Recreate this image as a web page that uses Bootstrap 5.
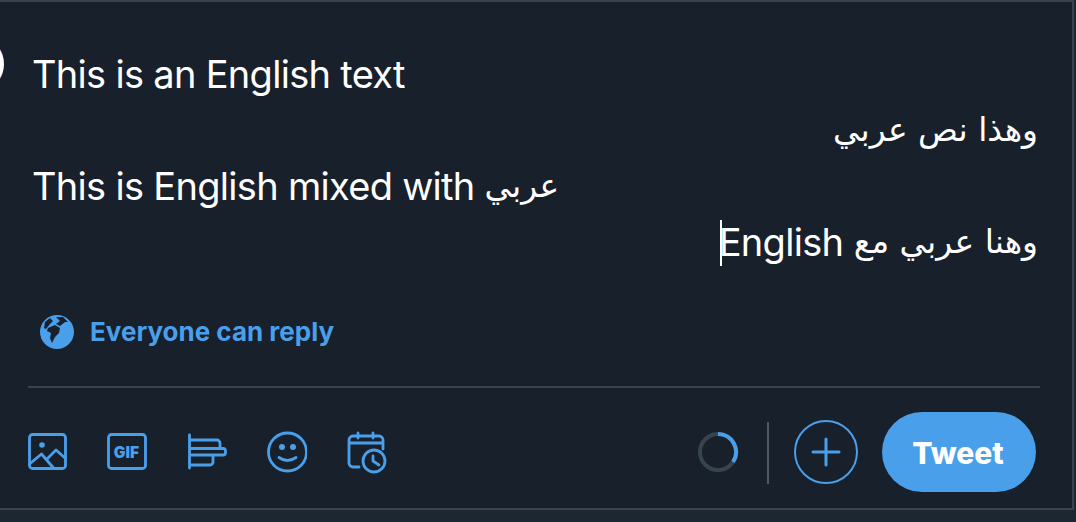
<!DOCTYPE html>
<html lang="en"><head><meta charset="utf-8"><title>Tweet composer</title>
<link href="https://cdn.jsdelivr.net/npm/bootstrap@5.3.0/dist/css/bootstrap.min.css" rel="stylesheet">
<style>
html,body{height:522px;overflow:hidden;background:#1c2732;margin:0}
.composer{width:1074px;height:510px;background:#18202b;border-top:2px solid #38444d;border-right:2px solid #38444d;border-bottom:2px solid #38444d;position:relative;overflow:hidden;font-family:Inter,"DejaVu Sans",sans-serif;color:#fff}
.avatar-edge{position:absolute;left:-36px;top:38px;width:40px;height:48px;border-radius:50%;background:#fff}
.editor{padding:44px 34px 0 32px;height:296px}
.editor p{margin:0;font-size:38px;line-height:56px;height:56px;letter-spacing:-.7px;white-space:nowrap}
.ar{font-family:"DejaVu Sans",sans-serif;font-size:33px;letter-spacing:0;line-height:1;vertical-align:3px}
.caret{display:inline-block;width:2px;height:46px;background:#fff;vertical-align:-10px;margin-right:-3px;margin-left:1px}
.reply{padding-left:40px;gap:16px;height:88px;padding-bottom:21px;color:#4a9fea;font-weight:700;font-size:26px}
.rule{height:2px;background:#38444d;margin:0 32px 0 28px}
.tools{padding:24px 36px 0 27px}
.tool{width:40px;height:44px;margin-right:40px}
.tool:last-child{margin-right:0}
.meter{width:42px;height:42px}
.sep{width:2px;height:62px;background:#4f5a63;margin:2px 25px 0 28px}
.add{width:64px;height:64px;border:2px solid #4a9fea;border-radius:50%;margin-right:24px}
.tweet-btn{width:154px;height:80px;border-radius:40px;background:#4a9fea;border:0;color:#fff;font-weight:800;font-size:30px;font-family:Inter,sans-serif;padding:2px 2px 0 0}
</style></head><body>
<div class="composer">
<div class="avatar-edge"></div>
<div class="editor">
<p>This is an English text</p>
<p dir="rtl"><span class="ar">وهذا نص عربي</span></p>
<p>This is English mixed with <span class="ar">عربي</span></p>
<p dir="rtl"><span class="ar">وهنا عربي مع </span>English<span class="caret"></span></p>
</div>
<div class="reply d-flex align-items-center">
<svg width="34" height="34" viewBox="0 0 34 34"><circle cx="17" cy="17" r="17" fill="#4a9fea"/><path d="M5 7l5-4 3 3-3 3-4 5-2-1zM16 2h7l5 5h-3l-5 4-4-2 4-3zM8 13l7-3 5 3-1 5-4 4-3 6-2-5 1-5-4-2z" fill="#18202b"/></svg>
<span>Everyone can reply</span>
</div>
<div class="rule"></div>
<div class="tools d-flex align-items-center">
<svg class="tool" viewBox="0 0 40 44" fill="none" stroke="#4a9fea" stroke-width="2.800" stroke-linejoin="round" stroke-linecap="round"><rect x="2.500" y="4.500" width="36" height="34" rx="3"/><circle cx="15" cy="15" r="2.800" fill="#4a9fea" stroke="none"/><path d="M2.500 34l12-10 12 14M20 29l9-9 9 8"/></svg>
<svg class="tool" viewBox="0 0 40 44" fill="none" stroke="#4a9fea" stroke-width="2.800"><rect x="1.500" y="4.500" width="37" height="34" rx="3"/><text x="19.500" y="27.500" text-anchor="middle" font-family="Inter,sans-serif" font-weight="900" font-size="15.500" fill="#4a9fea" stroke="none">GIF</text></svg>
<svg class="tool" viewBox="0 0 40 44" fill="none" stroke="#4a9fea" stroke-width="2.800" stroke-linecap="round" stroke-linejoin="round"><path d="M2.500 5v33M2.500 10H30a3 3 0 0 1 3 3v5M2.500 18.500H36a2.500 2.500 0 0 1 2.500 2.500v1.500a2.500 2.500 0 0 1-2.500 2.500H2.500M2.500 35H23a3 3 0 0 0 3-3v-7"/></svg>
<svg class="tool" viewBox="0 0 40 44"><g fill="none" stroke="#4a9fea" stroke-width="2.800" stroke-linecap="round"><circle cx="20.500" cy="22" r="19"/><path d="M12 27.500q8.500 6 17 0"/></g><circle cx="15" cy="17" r="3" fill="#4a9fea"/><circle cx="26" cy="17" r="3" fill="#4a9fea"/></svg>
<svg class="tool" viewBox="0 0 40 44" fill="none" stroke="#4a9fea" stroke-width="2.800" stroke-linecap="round" stroke-linejoin="round"><path d="M12 37H6a4 4 0 0 1-4-4V10a4 4 0 0 1 4-4h26a4 4 0 0 1 4 4v9M2 13h34M11 3v5M26 3v5"/><circle cx="27" cy="31" r="11" fill="#18202b"/><path d="M26 26v5l6 4"/></svg>
<div class="flex-grow-1"></div>
<svg class="meter" viewBox="0 0 42 42" fill="none" stroke-width="4"><circle cx="21" cy="21" r="18" stroke="#38444d"/><path d="M21 3a18 18 0 0 1 15 28" stroke="#4a9fea"/></svg>
<div class="sep"></div>
<div class="add d-flex align-items-center justify-content-center"><svg width="30" height="30" viewBox="0 0 30 30" stroke="#4a9fea" stroke-width="3" stroke-linecap="round"><path d="M15 2v26M2 15h26"/></svg></div>
<button class="btn tweet-btn">Tweet</button>
</div>
</div>
</body></html>
